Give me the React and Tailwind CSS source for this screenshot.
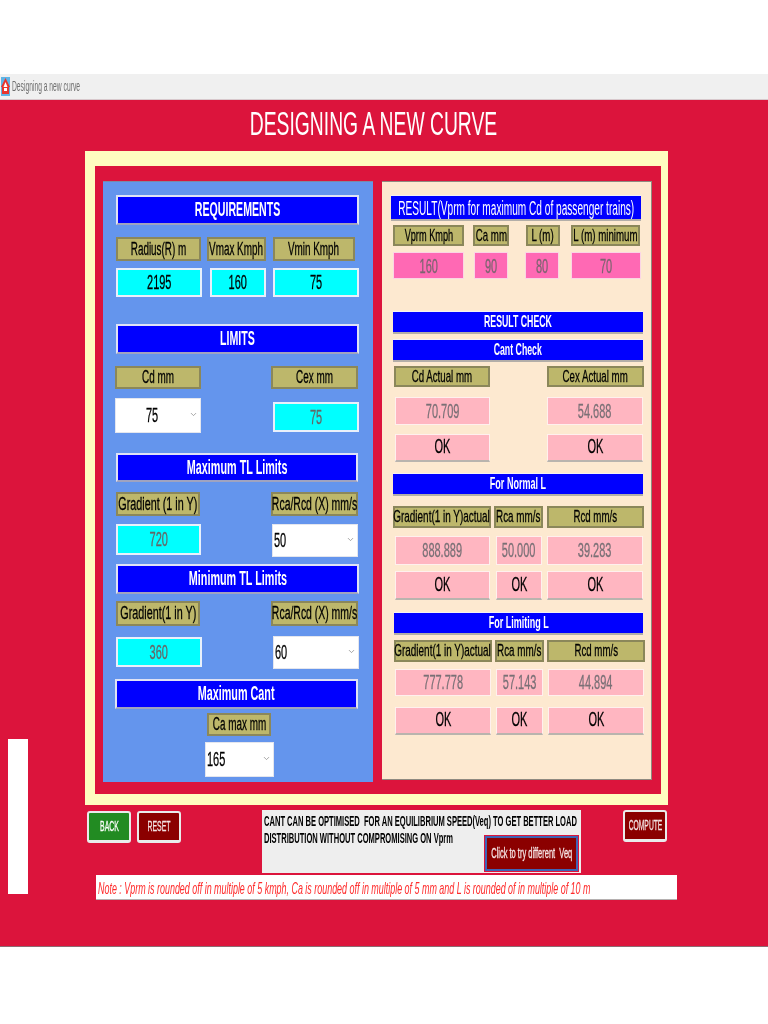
import React from 'react';
import { ChevronDown } from 'lucide-react';

// The source picture is stretched vertically, so text gets squeezed on the x axis
function Txt({ className = '', sx = 'scale-x-[0.55]', children }) {
  return <span className={`inline-block whitespace-pre ${sx} ${className}`}>{children}</span>;
}

function Head({ className = '', text = 'text-[20px] font-bold', sx = 'scale-x-[0.54]', children }) {
  return (
    <div className={`flex items-center justify-center pb-[2px] bg-[#0000ff] border-2 border-[#dfe2f5] border-b-[#9fa3c0] text-white ${className}`}>
      <Txt className={text} sx={sx}>{children}</Txt>
    </div>
  );
}

// right panel headers have no side bevel, just a grey lower edge
function FlatHead({ className = '', text = 'text-[17px] font-bold', sx = 'scale-x-[0.515]', children }) {
  return (
    <div className={`flex items-center justify-center bg-[#0000ff] border-t border-t-[#f4f1f4] border-b-2 border-b-[#b3aea8] text-white ${className}`}>
      <Txt className={text} sx={sx}>{children}</Txt>
    </div>
  );
}

function Lbl({ className = '', text = 'text-[18px]', sx = 'scale-x-[0.55]', children }) {
  return (
    <div className={`flex items-center justify-center bg-[#bdb76b] border-2 border-[#8b875a] text-black ${className}`}>
      <Txt className={`[-webkit-text-stroke:0.3px] ${text}`} sx={sx}>{children}</Txt>
    </div>
  );
}

function Cell({ className = '', children }) {
  return (
    <div className={`flex items-center justify-center text-[20px] ${className}`}>
      <Txt className="[-webkit-text-stroke:0.3px]">{children}</Txt>
    </div>
  );
}

const Cyan = ({ className = '', dim, children }) => (
  <Cell className={`bg-[#00ffff] border-2 border-[#e8f0fb] pb-[1px] ${dim ? 'text-[#666]' : 'text-black'} ${className}`}>{children}</Cell>
);
const Hot = ({ className = '', children }) => (
  <Cell className={`bg-[#ff69b4] border border-[#fbd5e5] text-[#7d6470] ${className}`}>{children}</Cell>
);
const Pink = ({ className = '', children }) => (
  <Cell className={`bg-[#ffb6c1] border border-[#fff0ee] pb-[1px] text-[#7a7076] ${className}`}>{children}</Cell>
);
const Ok = ({ className = '' }) => (
  <Cell className={`bg-[#ffb6c1] border border-[#fff0ee] border-b-2 border-b-[#b9b4ae] pb-[3px] text-black ${className}`}>OK</Cell>
);

function Drop({ className = '', value }) {
  return (
    <div className={`flex items-center justify-between bg-white border border-[#e4e6ee] pl-[1px] pr-[2px] pb-[2px] text-[20px] text-black ${className}`}>
      <Txt className="origin-left [-webkit-text-stroke:0.3px]">{value}</Txt>
      <ChevronDown size={9} className="text-[#8a8a8a]" />
    </div>
  );
}

function LeftPanel() {
  return (
    <div className="w-[270px] h-[601px] bg-[#6495ed] pl-[13px] pt-[13px] border-t border-[#7b8aa8]">
      <Head className="w-[243px] h-[30px]" text="text-[21px] font-bold" sx="scale-x-[0.505]">REQUIREMENTS</Head>

      <div className="flex mt-[12px]">
        <Lbl className="w-[85px] h-[24px]">Radius(R) m</Lbl>
        <Lbl className="w-[59px] h-[24px] ml-[6px]">Vmax Kmph</Lbl>
        <Lbl className="w-[82px] h-[24px] ml-[7px]">Vmin Kmph</Lbl>
      </div>
      <div className="flex mt-[7px]">
        <Cyan className="w-[86px] h-[29px]">2195</Cyan>
        <Cyan className="w-[56px] h-[29px] ml-[8px]">160</Cyan>
        <Cyan className="w-[86px] h-[29px] ml-[7px]">75</Cyan>
      </div>

      <Head className="w-[243px] h-[30px] mt-[27px]" text="text-[21px] font-bold" sx="scale-x-[0.505]">LIMITS</Head>
      <div className="flex mt-[12px] -ml-[1px]">
        <Lbl className="w-[86px] h-[23px]">Cd mm</Lbl>
        <Lbl className="w-[87px] h-[23px] ml-[70px]">Cex mm</Lbl>
      </div>
      <div className="flex items-start mt-[9px] -ml-[1px]">
        <Drop className="w-[86px] h-[35px] !pl-[30px]" value="75" />
        <Cyan dim className="w-[86px] h-[30px] mt-[4px] ml-[72px]">75</Cyan>
      </div>

      <Head className="w-[242px] h-[29px] mt-[20px]">Maximum TL Limits</Head>
      <div className="flex mt-[10px]">
        <Lbl className="w-[84px] h-[24px]" sx="scale-x-[0.6]">Gradient (1 in Y)</Lbl>
        <Lbl className="w-[87px] h-[24px] ml-[71px]" sx="scale-x-[0.58]">Rca/Rcd (X) mm/s</Lbl>
      </div>
      <div className="flex items-start mt-[8px]">
        <Cyan dim className="w-[85px] h-[31px]">720</Cyan>
        <Drop className="w-[86px] h-[33px] ml-[71px]" value="50" />
      </div>

      <Head className="w-[243px] h-[30px] mt-[7px]">Minimum TL Limits</Head>
      <div className="flex mt-[7px]">
        <Lbl className="w-[84px] h-[25px]" sx="scale-x-[0.6]">Gradient(1 in Y)</Lbl>
        <Lbl className="w-[87px] h-[25px] ml-[71px]" sx="scale-x-[0.58]">Rca/Rcd (X) mm/s</Lbl>
      </div>
      <div className="flex items-start mt-[10px]">
        <Cyan dim className="w-[86px] h-[30px] mt-[1px]">360</Cyan>
        <Drop className="w-[86px] h-[33px] ml-[71px]" value="60" />
      </div>

      <Head className="w-[243px] h-[30px] mt-[10px] -ml-[1px]">Maximum Cant</Head>
      <Lbl className="w-[64px] h-[23px] mt-[4px] ml-[91px]">Ca max mm</Lbl>
      <Drop className="w-[69px] h-[35px] mt-[6px] ml-[89px]" value="165" />
    </div>
  );
}

function RightPanel() {
  const small = 'text-[17px]';
  return (
    <div className="w-[270px] h-[599px] bg-[#fde9d0] pt-[13px] border-t border-r border-b border-[#8f8a80]">
      <FlatHead className="w-[250px] h-[26px] ml-[9px]" text="text-[20px]" sx="scale-x-[0.506]">RESULT(Vprm for maximum Cd of passenger trains)</FlatHead>

      <div className="flex mt-[4px]">
        <Lbl className="w-[71px] h-[21px] ml-[11px]" text={small} sx="scale-x-[0.54]">Vprm Kmph</Lbl>
        <Lbl className="w-[36px] h-[21px] ml-[9px]" text={small} sx="scale-x-[0.57]">Ca mm</Lbl>
        <Lbl className="w-[34px] h-[21px] ml-[17px]" text={small} sx="scale-x-[0.57]">L (m)</Lbl>
        <Lbl className="w-[69px] h-[21px] ml-[11px]" text={small} sx="scale-x-[0.57]">L (m) minimum</Lbl>
      </div>
      <div className="flex mt-[6px]">
        <Hot className="w-[71px] h-[27px] ml-[11px]">160</Hot>
        <Hot className="w-[34px] h-[27px] ml-[10px]">90</Hot>
        <Hot className="w-[34px] h-[27px] ml-[17px]">80</Hot>
        <Hot className="w-[70px] h-[27px] ml-[12px]">70</Hot>
      </div>

      <FlatHead className="w-[250px] h-[23px] mt-[32px] ml-[11px]">RESULT CHECK</FlatHead>
      <FlatHead className="w-[250px] h-[23px] mt-[5px] ml-[11px]">Cant Check</FlatHead>
      <div className="flex mt-[4px]">
        <Lbl className="w-[96px] h-[21px] ml-[12px]" text={small} sx="scale-x-[0.57]">Cd Actual mm</Lbl>
        <Lbl className="w-[97px] h-[21px] ml-[57px]" text={small} sx="scale-x-[0.57]">Cex Actual mm</Lbl>
      </div>
      <div className="flex mt-[10px]">
        <Pink className="w-[95px] h-[28px] ml-[13px]">70.709</Pink>
        <Pink className="w-[96px] h-[28px] ml-[57px]">54.688</Pink>
      </div>
      <div className="flex mt-[9px]">
        <Ok className="w-[95px] h-[28px] ml-[13px]" />
        <Ok className="w-[96px] h-[28px] ml-[57px]" />
      </div>

      <FlatHead className="w-[250px] h-[23px] mt-[11px] ml-[11px]" sx="scale-x-[0.53]">For Normal L</FlatHead>
      <div className="flex mt-[10px]">
        <Lbl className="w-[98px] h-[22px] ml-[11px]" text={small} sx="scale-x-[0.585]">Gradient(1 in Y)actual</Lbl>
        <Lbl className="w-[49px] h-[22px] ml-[3px]" text={small} sx="scale-x-[0.58]">Rca mm/s</Lbl>
        <Lbl className="w-[97px] h-[22px] ml-[4px]" text={small} sx="scale-x-[0.57]">Rcd mm/s</Lbl>
      </div>
      <div className="flex mt-[8px]">
        <Pink className="w-[95px] h-[29px] ml-[13px]">888.889</Pink>
        <Pink className="w-[46px] h-[29px] ml-[6px]">50.000</Pink>
        <Pink className="w-[96px] h-[29px] ml-[5px]">39.283</Pink>
      </div>
      <div className="flex mt-[6px]">
        <Ok className="w-[95px] h-[29px] ml-[13px]" />
        <Ok className="w-[46px] h-[29px] ml-[6px]" />
        <Ok className="w-[96px] h-[29px] ml-[5px]" />
      </div>

      <FlatHead className="w-[249px] h-[23px] mt-[12px] ml-[12px]" sx="scale-x-[0.53]">For Limiting L</FlatHead>
      <div className="flex mt-[5px]">
        <Lbl className="w-[98px] h-[22px] ml-[12px]" text={small} sx="scale-x-[0.585]">Gradient(1 in Y)actual</Lbl>
        <Lbl className="w-[49px] h-[22px] ml-[3px]" text={small} sx="scale-x-[0.58]">Rca mm/s</Lbl>
        <Lbl className="w-[98px] h-[22px] ml-[3px]" text={small} sx="scale-x-[0.57]">Rcd mm/s</Lbl>
      </div>
      <div className="flex mt-[7px]">
        <Pink className="w-[96px] h-[27px] ml-[13px]">777.778</Pink>
        <Pink className="w-[47px] h-[27px] ml-[5px]">57.143</Pink>
        <Pink className="w-[96px] h-[27px] ml-[5px]">44.894</Pink>
      </div>
      <div className="flex mt-[11px]">
        <Ok className="w-[96px] h-[28px] ml-[13px]" />
        <Ok className="w-[47px] h-[28px] ml-[5px]" />
        <Ok className="w-[96px] h-[28px] ml-[5px]" />
      </div>
    </div>
  );
}

function AppIcon() {
  return (
    <svg width="9" height="19" viewBox="0 0 9 19" className="ml-[1px] shrink-0">
      <rect width="9" height="19" fill="#5fb4e6" />
      <path d="M4.5 1 L9 10 H0 Z" fill="#e8352e" />
      <path d="M4.5 5 L6.5 10 H2.5 Z" fill="#fff" />
      <rect x="1" y="10" width="7" height="7" fill="#e8352e" />
      <rect x="3" y="11" width="3" height="3" fill="#fff" />
    </svg>
  );
}

export default function App() {
  return (
    <div className="relative w-[768px] h-[1024px] bg-white overflow-hidden blur-[0.4px] font-['Liberation_Sans',Arial,sans-serif]">
      <div className="h-[74px]" />
      <div className="flex items-center gap-[2px] h-[26px] bg-[#f0f0f0] border-b border-[#d8c8cc]">
        <AppIcon />
        <Txt className="origin-left text-[14px] text-[#6e6e6e]" sx="scale-x-[0.48]">Designing a new curve</Txt>
      </div>

      <div className="relative h-[847px] bg-[#dc143c] border-b border-[#8c6a72]">
        {/* stray white block on the left edge */}
        <div className="absolute left-[8px] top-[639px] w-[20px] h-[155px] bg-white" />

        <div className="flex items-center justify-center h-[51px] ml-[85px] w-[577px] text-white">
          <Txt className="text-[33px] -mt-[3px]" sx="scale-x-[0.585]">DESIGNING A NEW CURVE</Txt>
        </div>

        <div className="ml-[85px] w-[583px] h-[654px] bg-[#fffcc0] pl-[10px] pt-[15px] pr-[7px] pb-[11px]">
          <div className="flex items-start gap-[9px] h-full bg-[#dc143c] pl-[8px] pt-[15px]">
            <LeftPanel />
            <RightPanel />
          </div>
        </div>

        <div className="flex items-start ml-[85px] mt-[5px]">
          <button className="flex items-center justify-center w-[44px] h-[32px] mt-[1px] ml-[2px] bg-[#228b22] border-2 border-[#e9ecec] border-b-[3px] rounded-[3px] text-white text-[15px]">
            <Txt className="[-webkit-text-stroke:0.3px]" sx="scale-x-[0.46]">BACK</Txt>
          </button>
          <button className="flex items-center justify-center w-[44px] h-[32px] mt-[1px] ml-[6px] bg-[#8b0000] border-2 border-[#e9ecec] border-b-[3px] rounded-[3px] text-[#f3e4e4] text-[15px]">
            <Txt className="[-webkit-text-stroke:0.3px]" sx="scale-x-[0.46]">RESET</Txt>
          </button>

          <div className="relative w-[319px] h-[63px] ml-[81px] bg-[#eeeeee] pl-[2px] pt-[3px] text-black text-[14px] font-bold leading-[17px]">
            <Txt className="block origin-left" sx="scale-x-[0.54]">CANT CAN BE OPTIMISED  FOR AN EQUILIBRIUM SPEED(Veq) TO GET BETTER LOAD</Txt>
            <Txt className="block origin-left" sx="scale-x-[0.54]">DISTRIBUTION WITHOUT COMPROMISING ON Vprm</Txt>
            <button className="absolute right-[3px] bottom-[2px] flex items-center justify-center w-[93px] h-[35px] bg-[#8b0000] border-2 border-[#3f63b5] outline outline-1 outline-[#dc143c] text-[#f6e6e6] text-[14px] font-normal">
              <Txt className="[-webkit-text-stroke:0.3px]" sx="scale-x-[0.535]">Click to try different  Veq</Txt>
            </button>
          </div>

          <button className="flex items-center justify-center w-[44px] h-[32px] ml-[42px] bg-[#8b0000] border-2 border-[#e9ecec] border-b-[3px] rounded-[3px] text-[#f3e4e4] text-[15px]">
            <Txt className="[-webkit-text-stroke:0.3px]" sx="scale-x-[0.45]">COMPUTE</Txt>
          </button>
        </div>

        <div className="flex items-center w-[581px] h-[25px] ml-[96px] mt-[2px] bg-white border-b border-[#b5b0b0] pl-[2px] pt-[4px] text-[#ff2a2a] italic text-[17px]">
          <Txt className="origin-left" sx="scale-x-[0.525]">Note : Vprm is rounded off in multiple of 5 kmph, Ca is rounded off in multiple of 5 mm and L is rounded of in multiple of 10 m</Txt>
        </div>
      </div>
    </div>
  );
}
